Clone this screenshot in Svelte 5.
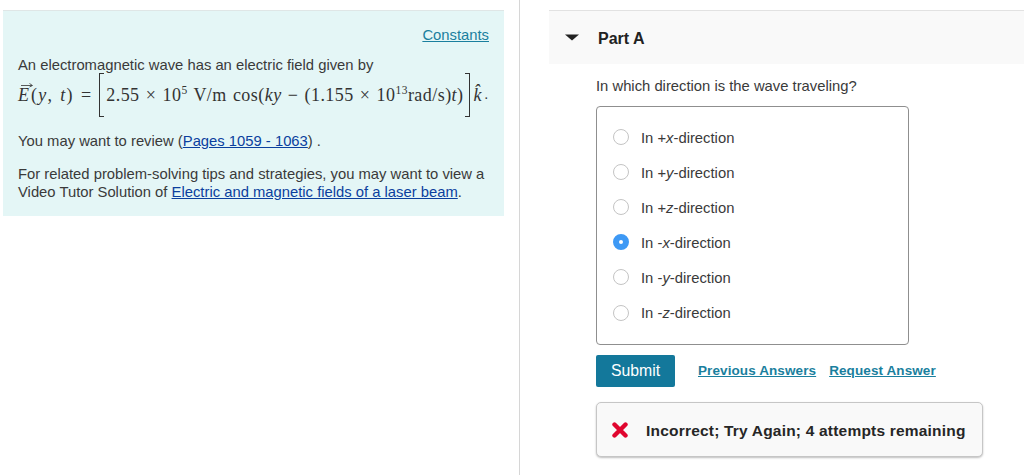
<script>
  const options = [
    { sign: '+', axis: 'x', checked: false },
    { sign: '+', axis: 'y', checked: false },
    { sign: '+', axis: 'z', checked: false },
    { sign: '-', axis: 'x', checked: true },
    { sign: '-', axis: 'y', checked: false },
    { sign: '-', axis: 'z', checked: false }
  ];
</script>

<div class="page">
  <section class="left">
    <div class="panel">
      <div class="constants"><a href="#c">Constants</a></div>
      <p class="intro">An electromagnetic wave has an electric field given by</p>
      <div class="math">
        <span class="vec"><i>E</i><svg class="arrow" viewBox="0 0 14 6" width="14" height="6"><path d="M1 3.5H12M9.5 1.5L12.5 3.5L9.5 5" fill="none" stroke="#333" stroke-width="0.8"/></svg></span><span class="lhs">(<i>y</i>, <i>t</i>) =</span>
        <span class="bracket left-b"></span>
        <span class="expr">2.55 × 10<sup>5</sup> V/m cos(<i>ky</i> − (1.155 × 10<sup>13</sup>rad/s)<i>t</i>)</span>
        <span class="bracket right-b"></span>
        <span class="khat"><i>k̂</i></span><span class="dot">.</span>
      </div>
      <p class="review">You may want to review (<a class="blue" href="#p">Pages 1059 - 1063</a>) .</p>
      <p class="tips">For related problem-solving tips and strategies, you may want to view a Video Tutor Solution of <a class="blue" href="#v">Electric and magnetic fields of a laser beam</a>.</p>
    </div>
  </section>

  <section class="right">
    <header class="part">
      <svg class="caret" viewBox="0 0 14 7" width="14" height="7"><path d="M0 0.5H14L7 6.5Z" fill="#222"/></svg>
      <h2>Part A</h2>
    </header>
    <div class="body">
      <p class="question">In which direction is the wave traveling?</p>
      <div class="options">
        {#each options as o}
          <div class="option">
            <span class="radio" class:checked={o.checked}></span>
            <span>In {o.sign}<i>{o.axis}</i>-direction</span>
          </div>
        {/each}
      </div>
      <div class="actions">
        <button type="button">Submit</button>
        <a class="action first" href="#a">Previous Answers</a>
        <a class="action" href="#r">Request Answer</a>
      </div>
      <div class="feedback">
        <svg class="cross" viewBox="0 0 16 16" width="16" height="16"><path d="M2.5 2.5L13.5 13.5M13.5 2.5L2.5 13.5" stroke="#e0062f" stroke-width="4.4" stroke-linecap="round" fill="none"/></svg>
        <span>Incorrect; Try Again; 4 attempts remaining</span>
      </div>
    </div>
  </section>
</div>

<style>
  :global(body) {
    margin: 0;
    background: #fff;
  }
  .page {
    display: flex;
    width: 1024px;
    height: 475px;
    overflow: hidden;
    font-family: "Liberation Sans", Arial, sans-serif;
    font-size: 14.8px;
    color: #3a3a3a;
  }
  .left {
    box-sizing: border-box;
    width: 520px;
    height: 475px;
    padding: 10px 15px 0 3px;
    border-right: 1px solid #d6d6d6;
  }
  .panel {
    box-sizing: border-box;
    height: 206px;
    padding: 15px 15px 0;
    background: #e4f6f6;
    border-top: 1px solid #dfe6e6;
  }
  .constants {
    text-align: right;
    line-height: 18px;
    margin-bottom: 12px;
  }
  .constants a {
    color: #1a7f9e;
  }
  p {
    margin: 0;
  }
  .intro {
    line-height: 18px;
  }
  .math {
    display: flex;
    align-items: center;
    height: 38px;
    margin-top: 2px;
    font-family: "Liberation Serif", "Times New Roman", serif;
    font-size: 18px;
    white-space: pre;
    color: #333;
  }
  .vec {
    position: relative;
    display: inline-block;
    margin-right: 2px;
  }
  .arrow {
    position: absolute;
    left: 2px;
    top: -3px;
  }
  .lhs {
    letter-spacing: 1.2px;
    word-spacing: 1.5px;
  }
  .expr {
    letter-spacing: 0.45px;
    word-spacing: 1.2px;
  }
  .bracket {
    flex: none;
    width: 5px;
    height: 44px;
    box-sizing: border-box;
    border: 1px solid #333;
  }
  .left-b {
    border-right: 0;
    margin-left: 7px;
    margin-right: 2px;
  }
  .right-b {
    border-left: 0;
    margin-left: 1px;
    margin-right: 4px;
  }
  sup {
    font-size: 11.5px;
    line-height: 0;
  }
  .dot {
    margin-left: 3px;
    font-size: 14px;
  }
  .review {
    margin-top: 18px;
    line-height: 18px;
  }
  .tips {
    margin-top: 15px;
    line-height: 18px;
  }
  .blue {
    color: #0b3f9e;
  }
  .right {
    flex: 1;
    padding: 10px 0 0 29px;
    min-width: 0;
  }
  .part {
    display: flex;
    align-items: center;
    box-sizing: border-box;
    height: 54px;
    padding-left: 16px;
    background: #f9f9f9;
    border-top: 1px solid #e2e2e2;
  }
  h2 {
    margin: 2px 0 0 19px;
    font-size: 16px;
    font-weight: 700;
    color: #222;
  }
  .body {
    padding-left: 47px;
  }
  .question {
    margin-top: 13px;
    line-height: 18px;
  }
  .options {
    box-sizing: border-box;
    width: 313px;
    height: 239px;
    margin-top: 11px;
    padding: 13px 16px 0;
    border: 1px solid #8f8f8f;
    border-radius: 4px;
  }
  .option {
    display: flex;
    align-items: center;
    height: 35.1px;
    gap: 12px;
  }
  .radio {
    box-sizing: border-box;
    width: 16px;
    height: 16px;
    margin-top: -1px;
    border-radius: 50%;
    border: 1px solid #c4c4c4;
    background: #fff;
  }
  .radio.checked {
    border: 6px solid #3d99f5;
  }
  .actions {
    display: flex;
    align-items: center;
    margin-top: 10px;
    height: 32px;
  }
  button {
    width: 79px;
    height: 32px;
    padding: 0;
    border: 0;
    border-radius: 2px;
    background: #13789b;
    color: #fff;
    font: 15.8px "Liberation Sans", Arial, sans-serif;
  }
  .action {
    margin-left: 13px;
    margin-top: -2px;
    color: #1a7f9e;
    font-size: 13.5px;
    font-weight: 700;
    letter-spacing: 0.1px;
  }
  .action.first {
    margin-left: 23px;
  }
  .feedback {
    display: flex;
    align-items: center;
    box-sizing: border-box;
    width: 387px;
    height: 55px;
    margin-top: 15px;
    padding: 2px 0 0 15px;
    background: #f9f9f9;
    border: 1px solid #c6c6c6;
    border-radius: 5px;
    box-shadow: 0 1px 2px rgba(0, 0, 0, 0.25);
    font-size: 15.5px;
    font-weight: 700;
    letter-spacing: 0.2px;
    color: #262626;
  }
  .cross {
    margin-right: 18px;
    margin-top: -2px;
  }
</style>
